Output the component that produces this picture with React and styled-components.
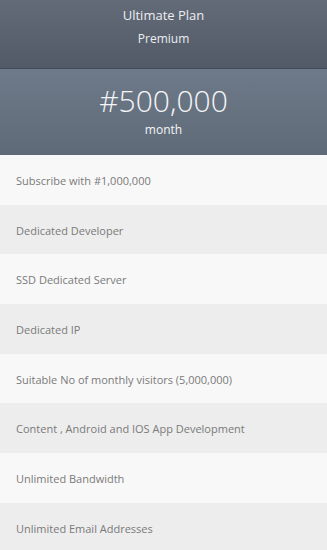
import React from "react";
import styled, { createGlobalStyle } from "styled-components";

const Global = createGlobalStyle`
  html, body { margin: 0; padding: 0; background: #ffffff; }
  body { font-family: "Open Sans", "Noto Sans", sans-serif; }
`;

const Card = styled.div`
  width: 327px;
  display: flex;
  flex-direction: column;
`;

const Head = styled.div`
  height: 68px;
  border-bottom: 1px solid #434a55;
  background: linear-gradient(180deg, #636b78, #525a67);
  display: flex;
  flex-direction: column;
  align-items: center;
  color: #eceef1;
`;

const Name = styled.div`
  font-size: 13px;
  margin-top: 6px;
  line-height: 18px;
`;

const Tier = styled.div`
  font-size: 12px;
  margin-top: 7px;
  line-height: 16px;
`;

const Price = styled.div`
  height: 86px;
  background: linear-gradient(180deg, #6e7a89, #5f6a78);
  display: flex;
  flex-direction: column;
  align-items: center;
  color: #f4f5f7;
`;

const Amount = styled.div`
  font-size: 30px;
  font-weight: 300;
  line-height: 34px;
  margin-top: 15px;
`;

const Period = styled.div`
  font-size: 12px;
  line-height: 16px;
  margin-top: 4px;
`;

const Row = styled.div`
  height: 49.7px;
  flex-shrink: 0;
  display: flex;
  align-items: center;
  padding-left: 16px;
  padding-top: 1px;
  box-sizing: border-box;
  font-size: 11px;
  color: #7a7a7a;
  background: ${(p) => (p.$alt ? "#ededed" : "#f8f8f8")};
`;

const features = [
  "Subscribe with #1,000,000",
  "Dedicated Developer",
  "SSD Dedicated Server",
  "Dedicated IP",
  "Suitable No of monthly visitors (5,000,000)",
  "Content , Android and IOS App Development",
  "Unlimited Bandwidth",
  "Unlimited Email Addresses",
];

export default function App() {
  return (
    <Card>
      <Global />
      <Head>
        <Name>Ultimate Plan</Name>
        <Tier>Premium</Tier>
      </Head>
      <Price>
        <Amount>#500,000</Amount>
        <Period>month</Period>
      </Price>
      {features.map((f, i) => (
        <Row key={f} $alt={i % 2 === 1}>
          {f}
        </Row>
      ))}
    </Card>
  );
}
